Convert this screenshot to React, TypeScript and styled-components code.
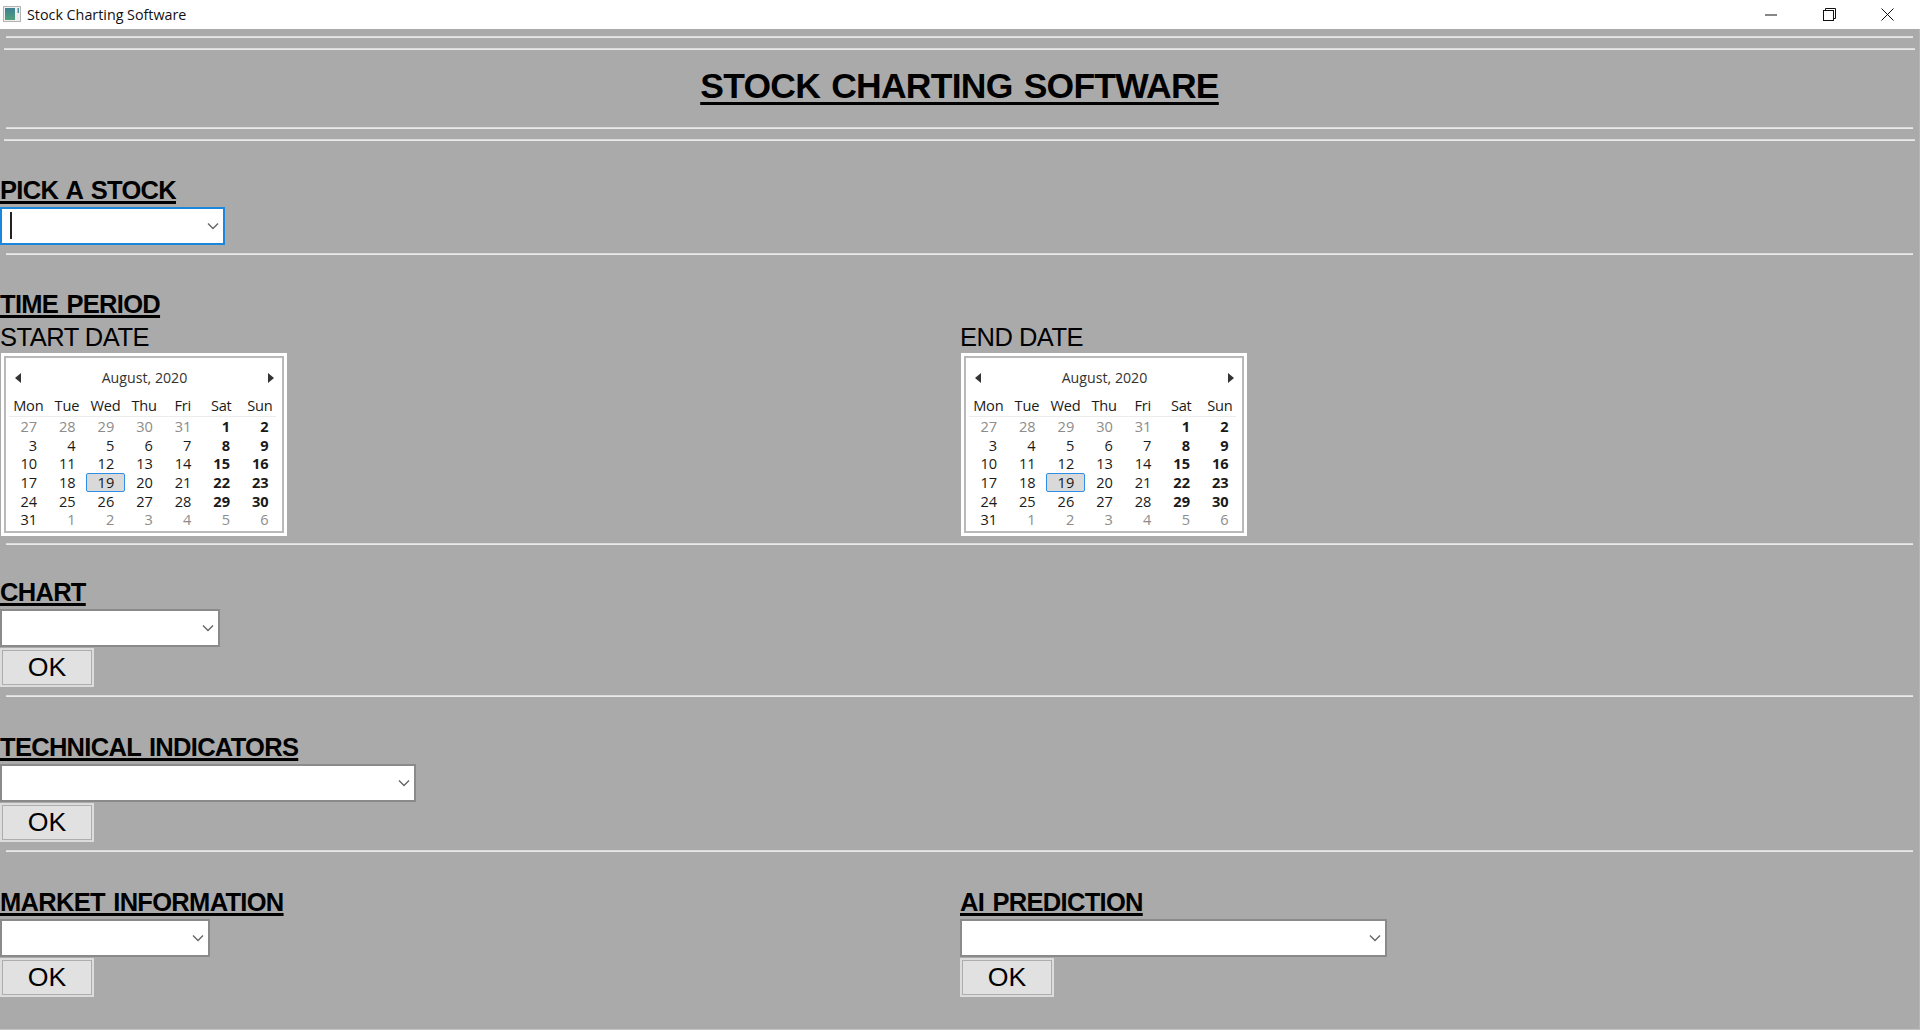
import React from "react";
import styled, { createGlobalStyle } from "styled-components";

const Global = createGlobalStyle`
  html, body { margin: 0; padding: 0; background: #aaaaaa; }
  body { font-family: "Liberation Sans", Arial, sans-serif; color: #000; }
`;

const Page = styled.div`
  width: 1920px;
  height: 1030px;
  overflow: hidden;
  display: flex;
  flex-direction: column;
  background: #aaaaaa;
`;

const TitleBar = styled.div`
  height: 29px;
  flex: none;
  background: #fff;
  display: flex;
  align-items: center;
  padding-right: 3px;
`;

const AppIcon = styled.svg`
  width: 20px;
  height: 18px;
  margin-left: 2px;
  flex: none;
`;

const WindowTitle = styled.span`
  margin: 0 0 1px 5px;
  flex: 1;
  font: 14.3px "Open Sans", "Noto Sans", sans-serif;
  color: #111;
`;

const WindowButton = styled.button`
  width: 58.5px;
  height: 29px;
  border: 0;
  padding: 0;
  background: transparent;
  display: flex;
  align-items: center;
  justify-content: center;
`;

const Body = styled.div`
  flex: 1;
  min-height: 0;
  display: flex;
  flex-direction: column;
  border-right: 1px solid #b6b6b6;
  border-bottom: 1px solid #c4c4c4;
`;

const Rule = styled.div<{ $inset: number; $top: number }>`
  flex: none;
  height: 2px;
  margin: ${(p) => p.$top}px ${(p) => p.$inset}px 0;
  background: linear-gradient(#d4d4d4, #f0f0f0);
`;

const MainTitle = styled.h1`
  margin: 0;
  height: 66px;
  padding-top: 6px;
  box-sizing: border-box;
  font-size: 35.5px;
  line-height: 44px;
  font-weight: 700;
  letter-spacing: -0.75px;
  word-spacing: 2px;
  text-decoration: underline;
  text-decoration-thickness: 3px;
  text-underline-offset: 4px;
  display: flex;
  align-items: center;
  justify-content: center;
`;

const Heading = styled.h2<{ $top: number }>`
  margin: ${(p) => p.$top}px 0 0;
  font-size: 25.5px;
  line-height: 30px;
  font-weight: 700;
  letter-spacing: -0.7px;
  word-spacing: 2px;
  text-decoration: underline;
  text-decoration-thickness: 3px;
  text-underline-offset: 2px;
`;

const SubHeading = styled.div`
  font-size: 25.5px;
  line-height: 30px;
  letter-spacing: -0.5px;
  margin-top: 3px;
`;

const Combo = styled.div<{ $width: number; $focus?: boolean }>`
  width: ${(p) => p.$width}px;
  height: 38px;
  box-sizing: border-box;
  margin-top: 2px;
  background: #fff;
  border: ${(p) => (p.$focus ? "2px solid #1c86dc" : "2px solid #8a8a8a")};
  position: relative;
  display: flex;
  align-items: center;
  justify-content: flex-end;
  padding-right: 4px;
`;

const Caret = styled.span`
  position: absolute;
  left: 8px;
  top: 3px;
  bottom: 4px;
  width: 2px;
  background: #222;
`;

const Chevron = styled.svg`
  width: 12px;
  height: 8px;
  flex: none;
`;

const OkButton = styled.button`
  display: block;
  width: 94px;
  height: 39px;
  margin-top: 1px;
  padding: 0;
  box-sizing: border-box;
  background: #e1e1e1;
  border: 2px solid #dcdcdc;
  box-shadow: inset 0 0 0 1px #adadad;
  font-family: "Liberation Sans", Arial, sans-serif;
  font-size: 26.67px;
  color: #000;
`;

const Columns = styled.div`
  display: grid;
  grid-template-columns: 960px 959px;
`;

const Column = styled.div``;

const Calendar = styled.div`
  width: 286px;
  height: 183px;
  margin: 1px 0 0 1px;
  box-sizing: border-box;
  background: #fff;
  border: 3px solid #fff;
  outline: 2px solid #b9b9b9;
  outline-offset: -5px;
  padding: 8.5px 6px 0 5px;
  font-family: "Open Sans", "Noto Sans", sans-serif;
  font-size: 14.6px;
  color: #1a1a1a;
`;

const CalHeader = styled.div`
  height: 26px;
  display: flex;
  align-items: center;
  justify-content: space-between;
  padding: 0 4px 0 6px;
  font-size: 14.2px;
  color: #333;
`;

const Arrow = styled.svg`
  width: 6px;
  height: 10px;
  flex: none;
`;

const WeekRow = styled.div`
  display: grid;
  grid-template-columns: repeat(7, 38.6px);
  height: 22px;
  line-height: 22px;
  margin: 3.5px 2px 0 0;
  border-bottom: 1px solid #ececec;
  text-align: center;
`;

const WeekDay = styled.span`
  letter-spacing: -0.2px;
`;

const DayGrid = styled.div`
  display: grid;
  grid-template-columns: repeat(7, 38.6px);
  grid-auto-rows: 18.7px;
  line-height: 18.7px;
`;

const Day = styled.span<{ $muted?: boolean; $weekend?: boolean; $today?: boolean }>`
  text-align: right;
  padding-right: 10.5px;
  box-sizing: border-box;
  position: relative;
  z-index: 0;
  font-weight: ${(p) => (p.$weekend ? 700 : 400)};
  color: ${(p) => (p.$muted ? "#8c8c8c" : "#1a1a1a")};
  &::before {
    content: "";
    display: ${(p) => (p.$today ? "block" : "none")};
    position: absolute;
    z-index: -1;
    inset: 0;
    background: #d9d9d9;
    border: 1px solid #2f8fe6;
    border-radius: 2px;
  }
`;

const weekdays = ["Mon", "Tue", "Wed", "Thu", "Fri", "Sat", "Sun"];
const days: { n: number; muted?: boolean }[] = [
  ...[27, 28, 29, 30, 31].map((n) => ({ n, muted: true })),
  ...Array.from({ length: 31 }, (_, i) => ({ n: i + 1 })),
  ...[1, 2, 3, 4, 5, 6].map((n) => ({ n, muted: true })),
];

function MonthCalendar() {
  return (
    <Calendar>
      <CalHeader>
        <Arrow viewBox="0 0 6 10"><path d="M6 0v10L0 5z" fill="#333" /></Arrow>
        <span>August, 2020</span>
        <Arrow viewBox="0 0 6 10"><path d="M0 0v10l6-5z" fill="#333" /></Arrow>
      </CalHeader>
      <WeekRow>{weekdays.map((d) => <WeekDay key={d}>{d}</WeekDay>)}</WeekRow>
      <DayGrid>
        {days.map((d, i) => (
          <Day
            key={i}
            $muted={d.muted}
            $weekend={!d.muted && i % 7 >= 5}
            $today={!d.muted && d.n === 19}
          >
            {d.n}
          </Day>
        ))}
      </DayGrid>
    </Calendar>
  );
}

function DropDown({ width, focus }: { width: number; focus?: boolean }) {
  return (
    <Combo $width={width} $focus={focus}>
      {focus && <Caret />}
      <Chevron viewBox="0 0 12 8">
        <path d="M1 1.5l5 5 5-5" fill="none" stroke="#666" strokeWidth="1.4" />
      </Chevron>
    </Combo>
  );
}

export default function App() {
  return (
    <Page>
      <Global />
      <TitleBar>
        <AppIcon viewBox="0 0 20 18">
          <defs>
            <linearGradient id="appIconFill" x1="0" y1="0" x2="0" y2="1">
              <stop offset="0" stopColor="#3f7f92" />
              <stop offset="1" stopColor="#4fa07a" />
            </linearGradient>
          </defs>
          <rect x="1.5" y="0.5" width="17" height="15" fill="#eeeeee" stroke="#b4b4b4" />
          <rect x="3" y="2" width="10" height="12" fill="url(#appIconFill)" />
          <rect x="15.5" y="2" width="1.5" height="5" fill="#4d8fa0" />
        </AppIcon>
        <WindowTitle>Stock Charting Software</WindowTitle>
        <WindowButton aria-label="Minimize">
          <svg width="12" height="12" viewBox="0 0 12 12"><path d="M0 6h12" stroke="#111" strokeWidth="1" /></svg>
        </WindowButton>
        <WindowButton aria-label="Restore">
          <svg width="13" height="13" viewBox="0 0 13 13" fill="none" stroke="#111" strokeWidth="1">
            <rect x="0.5" y="2.5" width="10" height="10" />
            <path d="M2.5 2.5V0.5h10v10h-2" />
          </svg>
        </WindowButton>
        <WindowButton aria-label="Close">
          <svg width="13" height="13" viewBox="0 0 13 13"><path d="M.5.5l12 12M12.5.5l-12 12" stroke="#111" strokeWidth="1" /></svg>
        </WindowButton>
      </TitleBar>

      <Body>
        <Rule $inset={6} $top={7} />
        <Rule $inset={4} $top={10} />
        <MainTitle>STOCK CHARTING SOFTWARE</MainTitle>
        <Rule $inset={6} $top={11} />
        <Rule $inset={4} $top={10} />

        <Heading $top={34}>PICK A STOCK</Heading>
        <DropDown width={225} focus />
        <Rule $inset={6} $top={8} />

        <Heading $top={34}>TIME PERIOD</Heading>
        <Columns>
          <Column>
            <SubHeading>START DATE</SubHeading>
            <MonthCalendar />
          </Column>
          <Column>
            <SubHeading>END DATE</SubHeading>
            <MonthCalendar />
          </Column>
        </Columns>
        <Rule $inset={6} $top={7} />

        <Heading $top={32}>CHART</Heading>
        <DropDown width={220} />
        <OkButton>OK</OkButton>
        <Rule $inset={6} $top={8} />

        <Heading $top={35}>TECHNICAL INDICATORS</Heading>
        <DropDown width={416} />
        <OkButton>OK</OkButton>
        <Rule $inset={6} $top={8} />

        <Columns>
          <Column>
            <Heading $top={35}>MARKET INFORMATION</Heading>
            <DropDown width={210} />
            <OkButton>OK</OkButton>
          </Column>
          <Column>
            <Heading $top={35}>AI PREDICTION</Heading>
            <DropDown width={427} />
            <OkButton>OK</OkButton>
          </Column>
        </Columns>
      </Body>
    </Page>
  );
}
